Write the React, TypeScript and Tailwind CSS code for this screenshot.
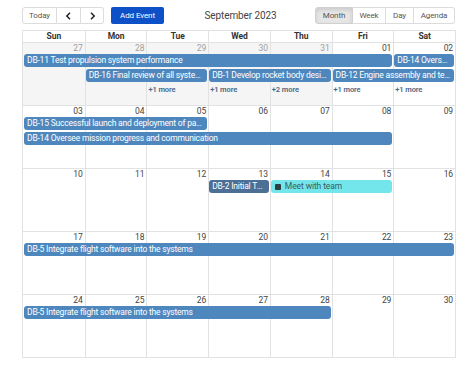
import React from "react";

type Ev = { title: string; start: number; span: number; lane: number; kind?: "blue" | "dark" | "cyan" };
type Week = { dates: string[]; off: boolean[]; events: Ev[]; more?: (string | null)[] };

const colStart: Record<number, string> = {
  1: "col-start-1",
  2: "col-start-2",
  3: "col-start-3",
  4: "col-start-4",
  5: "col-start-5",
  6: "col-start-6",
  7: "col-start-7",
};
const colSpan: Record<number, string> = {
  1: "col-span-1",
  2: "col-span-2",
  3: "col-span-3",
  4: "col-span-4",
  5: "col-span-5",
  6: "col-span-6",
  7: "col-span-7",
};
const rowStart: Record<number, string> = {
  0: "row-start-2",
  1: "row-start-3",
  2: "row-start-4",
};

const weeks: Week[] = [
  {
    dates: ["27", "28", "29", "30", "31", "01", "02"],
    off: [true, true, true, true, true, false, false],
    events: [
      { title: "DB-11 Test propulsion system performance", start: 1, span: 6, lane: 0 },
      { title: "DB-14 Oversee mission progress and communication", start: 7, span: 1, lane: 0 },
      { title: "DB-16 Final review of all systems before launch", start: 2, span: 2, lane: 1 },
      { title: "DB-1 Develop rocket body design", start: 4, span: 2, lane: 1 },
      { title: "DB-12 Engine assembly and testing", start: 6, span: 2, lane: 1 },
    ],
    more: [null, null, "+1 more", "+1 more", "+2 more", "+1 more", "+1 more"],
  },
  {
    dates: ["03", "04", "05", "06", "07", "08", "09"],
    off: [false, false, false, false, false, false, false],
    events: [
      { title: "DB-15 Successful launch and deployment of payload", start: 1, span: 3, lane: 0 },
      { title: "DB-14 Oversee mission progress and communication", start: 1, span: 6, lane: 1 },
    ],
  },
  {
    dates: ["10", "11", "12", "13", "14", "15", "16"],
    off: [false, false, false, false, false, false, false],
    events: [
      { title: "DB-2 Initial Testing", start: 4, span: 1, lane: 0, kind: "dark" },
      { title: "Meet with team", start: 5, span: 2, lane: 0, kind: "cyan" },
    ],
  },
  {
    dates: ["17", "18", "19", "20", "21", "22", "23"],
    off: [false, false, false, false, false, false, false],
    events: [{ title: "DB-5 Integrate flight software into the systems", start: 1, span: 7, lane: 0 }],
  },
  {
    dates: ["24", "25", "26", "27", "28", "29", "30"],
    off: [false, false, false, false, false, false, false],
    events: [{ title: "DB-5 Integrate flight software into the systems", start: 1, span: 5, lane: 0 }],
  },
];

const days = ["Sun", "Mon", "Tue", "Wed", "Thu", "Fri", "Sat"];

function EventBar({ ev }: { ev: Ev }) {
  const pos = `${colStart[ev.start]} ${colSpan[ev.span]} ${rowStart[ev.lane]}`;
  if (ev.kind === "cyan") {
    return (
      <div className={`${pos} mx-[1px] h-[13px] rounded-[3px] bg-[#72e6ea] text-[#3a5c60] flex items-center gap-[4px] pl-[4px] pr-[3px] overflow-hidden`}>
        <span className="w-[6px] h-[6px] rounded-[1px] bg-[#2c3e44] shrink-0" />
        <span className="truncate text-[8.5px] leading-none">{ev.title}</span>
      </div>
    );
  }
  const bg = ev.kind === "dark" ? "bg-[#4b6f95]" : "bg-[#4d87be]";
  return (
    <div className={`${pos} mx-[1px] h-[13px] rounded-[3px] ${bg} text-white flex items-center px-[3px] overflow-hidden`}>
      <span className="truncate text-[8.5px] leading-none tracking-[-0.2px]">{ev.title}</span>
    </div>
  );
}

export default function App() {
  return (
    <div className="w-[474px] h-[365px] bg-white font-['Roboto','Noto_Sans',sans-serif] text-[#333] tracking-[-0.1px]">
      <div className="pl-[22px] pr-[19px] pt-[7px]">
        <div className="flex items-center h-[17px]">
          <div className="flex h-[17px]">
            <button className="w-[35px] h-full border border-[#dcdcdc] rounded-l-[3px] text-[8px] text-[#555] flex items-center justify-center">Today</button>
            <button className="w-[24px] h-full border-y border-r border-[#dcdcdc] flex items-center justify-center">
              <svg width="7" height="8" viewBox="0 0 7 8"><path d="M5 0.8 L1.8 4 L5 7.2" fill="none" stroke="#222" strokeWidth="1.5" /></svg>
            </button>
            <button className="w-[23px] h-full border-y border-r border-[#dcdcdc] rounded-r-[3px] flex items-center justify-center">
              <svg width="7" height="8" viewBox="0 0 7 8"><path d="M2 0.8 L5.2 4 L2 7.2" fill="none" stroke="#222" strokeWidth="1.5" /></svg>
            </button>
          </div>
          <button className="ml-[7px] w-[53px] h-[17px] rounded-[2px] bg-[#0e50c7] text-white text-[8px] flex items-center justify-center">Add Event</button>
          <div className="flex-1 text-center text-[10px] text-[#444] pl-[2px]">September 2023</div>
          <div className="flex h-[17px] text-[8px] text-[#555]">
            <button className="w-[38px] h-full border border-[#d0d0d0] rounded-l-[3px] bg-[#e6e6e6] shadow-[inset_0_2px_4px_rgba(0,0,0,0.12)] flex items-center justify-center">Month</button>
            <button className="w-[33px] h-full border-y border-r border-[#dcdcdc] flex items-center justify-center">Week</button>
            <button className="w-[28px] h-full border-y border-r border-[#dcdcdc] flex items-center justify-center">Day</button>
            <button className="w-[41px] h-full border-y border-r border-[#dcdcdc] rounded-r-[3px] flex items-center justify-center">Agenda</button>
          </div>
        </div>
      </div>

      <div className="ml-[22px] mt-[6px] w-[434px] border border-[#e2e2e2]">
        <div className="grid grid-cols-7 h-[11px]">
          {days.map((d, i) => (
            <div key={d} className={`flex items-center justify-center text-[8.5px] font-bold text-[#333] leading-none ${i > 0 ? "border-l border-[#e2e2e2]" : ""}`}>
              {d}
            </div>
          ))}
        </div>
        {weeks.map((w, wi) => (
          <div key={wi} className="grid grid-cols-7 grid-rows-[11px_15px_15px_12px_1fr] h-[63px] border-t border-[#e2e2e2]">
            {w.dates.map((d, i) => (
              <div
                key={i}
                className={`${colStart[i + 1]} row-start-1 row-span-5 flex justify-end pr-[2px] pt-[1px] text-[8.5px] leading-none ${
                  i > 0 ? "border-l border-[#e2e2e2]" : ""
                } ${w.off[i] ? "bg-[#f5f5f5] text-[#a0a0a0]" : "text-[#444]"}`}
              >
                {d}
              </div>
            ))}
            {w.events.map((ev, ei) => (
              <EventBar key={ei} ev={ev} />
            ))}
            {w.more &&
              w.more.map((m, i) =>
                m ? (
                  <div key={`m${i}`} className={`${colStart[i + 1]} row-start-4 pl-[2px] flex items-center text-[7.5px] font-semibold text-[#4b6684] leading-none`}>
                    {m}
                  </div>
                ) : null
              )}
          </div>
        ))}
      </div>
    </div>
  );
}
